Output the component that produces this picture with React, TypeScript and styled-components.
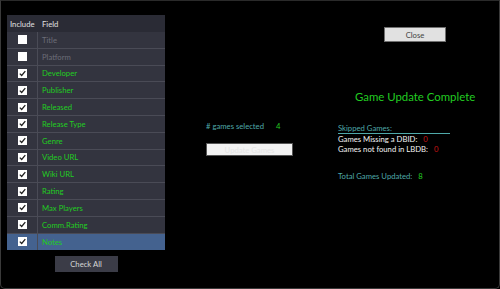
import styled, { createGlobalStyle } from "styled-components"

const GlobalStyle = createGlobalStyle`
    html, body {
        margin: 0;
        padding: 0;
        background: #000;
    }
    body {
        font-family: Lato, "Noto Sans", sans-serif;
    }
`

const Window = styled.div`
    width: 500px;
    height: 289px;
    box-sizing: border-box;
    background: #000;
    border: 1px solid #3a3a3a;
    border-top-color: #2a2a2a;
    border-radius: 0 0 5px 5px;
    display: flex;
    overflow: hidden;
    white-space: nowrap;
    font-size: 7.7px;
`

const LeftPane = styled.div`
    width: 158px;
    flex-shrink: 0;
    margin-left: 6px;
    padding-top: 14px;
    display: flex;
    flex-direction: column;
    align-items: center;
`

const Grid = styled.div`
    width: 158px;
    background: #33343f;
`

const GridRow = styled.div<{ $header?: boolean; $selected?: boolean }>`
    display: grid;
    grid-template-columns: 31px 1fr;
    height: ${(p) => (p.$header ? "17px" : "16.8px")};
    background: ${(p) => (p.$header ? "#2a2b35" : p.$selected ? "#44628f" : "#33343f")};
    border-bottom: ${(p) => (p.$header ? "none" : "1px solid #4a4b56")};
    box-sizing: border-box;
    &:last-child {
        border-bottom: none;
    }
`

const HeadCell = styled.div<{ $pad: number }>`
    display: flex;
    align-items: center;
    padding-left: ${(p) => p.$pad}px;
    color: #e0e0e0;
`

const CheckCell = styled.div`
    display: flex;
    align-items: center;
    justify-content: center;
    border-right: 1px solid #4a4b56;
`

const FieldCell = styled.div<{ $on: boolean }>`
    display: flex;
    align-items: center;
    padding-left: 4px;
    color: ${(p) => (p.$on ? "#22cc22" : "#6c6d78")};
`

const Box = styled.span`
    width: 9px;
    height: 9px;
    background: #fff;
    display: flex;
    align-items: center;
    justify-content: center;
`

const CheckAll = styled.button`
    margin-top: 6px;
    width: 63px;
    height: 16px;
    border: none;
    background: #3b3c47;
    color: #d6d6d6;
    font-family: inherit;
    font-size: 7.7px;
    padding: 0;
`

const MiddlePane = styled.div`
    margin-left: 41px;
    padding-top: 120px;
    width: 88px;
    flex-shrink: 0;
    display: flex;
    flex-direction: column;
`

const InfoLine = styled.div`
    display: flex;
    height: 10px;
    align-items: center;
`

const Label = styled.span<{ $tone?: "teal" | "white" }>`
    color: ${(p) => (p.$tone === "white" ? "#f4f4f4" : "#4fa9a9")};
`

const Value = styled.span<{ $tone: "green" | "red"; $gap: number }>`
    margin-left: ${(p) => p.$gap}px;
    color: ${(p) => (p.$tone === "green" ? "#22cc22" : "#c81414")};
`

const UpdateButton = styled.button`
    margin-top: 12px;
    width: 87px;
    height: 13px;
    padding: 0;
    border: 1px solid #555;
    background: #f2f2f2;
    color: #e4e4e4;
    font-family: inherit;
    font-size: 7.7px;
    line-height: 10px;
`

const RightPane = styled.div`
    margin-left: 44px;
    padding-top: 26px;
    width: 150px;
    flex-shrink: 0;
    display: flex;
    flex-direction: column;
`

const CloseButton = styled.button`
    align-self: flex-start;
    margin-left: 46px;
    width: 62px;
    height: 15px;
    padding: 0;
    border: 1px solid #707070;
    background: #e1e1e1;
    color: #444;
    font-family: inherit;
    font-size: 7.7px;
    line-height: 12px;
`

const Status = styled.div`
    margin-top: 48px;
    margin-left: 17px;
    color: #22cc22;
    font-size: 11.4px;
    line-height: 14px;
`

const SkippedTitle = styled.div`
    margin-top: 19px;
    width: 112px;
    color: #4fa9a9;
    border-bottom: 1px solid #4fa9a9;
    line-height: 10px;
`

const Spacer = styled.div`
    height: 17px;
`

const fields: [string, boolean][] = [
    ["Title", false],
    ["Platform", false],
    ["Developer", true],
    ["Publisher", true],
    ["Released", true],
    ["Release Type", true],
    ["Genre", true],
    ["Video URL", true],
    ["Wiki URL", true],
    ["Rating", true],
    ["Max Players", true],
    ["Comm.Rating", true],
    ["Notes", true],
]

function CheckBox({ checked }: { checked: boolean }) {
    return (
        <Box>
            {checked && (
                <svg width="7" height="7" viewBox="0 0 7 7">
                    <path d="M0.8 3.6 L2.7 5.5 L6.3 1.2" fill="none" stroke="#222" strokeWidth="1.3" />
                </svg>
            )}
        </Box>
    )
}

export default function App() {
    return (
        <>
            <GlobalStyle />
            <Window>
                <LeftPane>
                    <Grid>
                        <GridRow $header>
                            <HeadCell $pad={3}>Include</HeadCell>
                            <HeadCell $pad={4}>Field</HeadCell>
                        </GridRow>
                        {fields.map(([name, on], i) => (
                            <GridRow key={name} $selected={i === fields.length - 1}>
                                <CheckCell>
                                    <CheckBox checked={on} />
                                </CheckCell>
                                <FieldCell $on={on}>{name}</FieldCell>
                            </GridRow>
                        ))}
                    </Grid>
                    <CheckAll>Check All</CheckAll>
                </LeftPane>
                <MiddlePane>
                    <InfoLine>
                        <Label># games selected</Label>
                        <Value $tone="green" $gap={12}>4</Value>
                    </InfoLine>
                    <UpdateButton disabled>Update Games</UpdateButton>
                </MiddlePane>
                <RightPane>
                    <CloseButton>Close</CloseButton>
                    <Status>Game Update Complete</Status>
                    <SkippedTitle>Skipped Games:</SkippedTitle>
                    <InfoLine>
                        <Label $tone="white">Games Missing a DBID:</Label>
                        <Value $tone="red" $gap={6}>0</Value>
                    </InfoLine>
                    <InfoLine>
                        <Label $tone="white">Games not found in LBDB:</Label>
                        <Value $tone="red" $gap={6}>0</Value>
                    </InfoLine>
                    <Spacer />
                    <InfoLine>
                        <Label>Total Games Updated:</Label>
                        <Value $tone="green" $gap={6}>8</Value>
                    </InfoLine>
                </RightPane>
            </Window>
        </>
    )
}
